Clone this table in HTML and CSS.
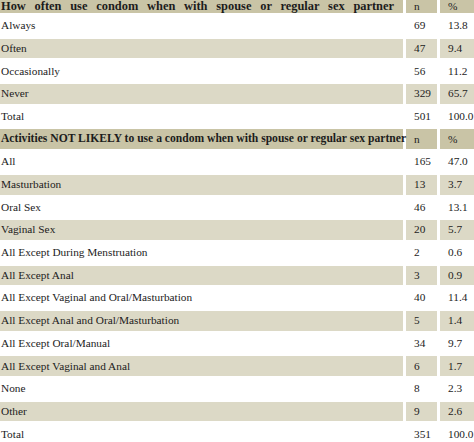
FILE: index.html
```html
<!DOCTYPE html>
<html>
<head>
<meta charset="utf-8">
<link rel="stylesheet" href="styles.css">
</head>
<body>
<table class="data">
  <colgroup><col class="c-label"><col class="c-n"><col class="c-pct"></colgroup>
  <tr class="head first"><td class="lbl">How often use condom when with spouse or regular sex partner</td><td class="n">n</td><td class="p">%</td></tr>
  <tr><td>Always</td><td class="n">69</td><td class="p">13.8</td></tr>
  <tr class="alt"><td>Often</td><td class="n">47</td><td class="p">9.4</td></tr>
  <tr><td>Occasionally</td><td class="n">56</td><td class="p">11.2</td></tr>
  <tr class="alt"><td>Never</td><td class="n">329</td><td class="p">65.7</td></tr>
  <tr><td>Total</td><td class="n">501</td><td class="p">100.0</td></tr>
  <tr class="head"><td class="lbl">Activities NOT LIKELY to use a condom when with spouse or regular sex partner</td><td class="n">n</td><td class="p">%</td></tr>
  <tr><td>All</td><td class="n">165</td><td class="p">47.0</td></tr>
  <tr class="alt"><td>Masturbation</td><td class="n">13</td><td class="p">3.7</td></tr>
  <tr><td>Oral Sex</td><td class="n">46</td><td class="p">13.1</td></tr>
  <tr class="alt"><td>Vaginal Sex</td><td class="n">20</td><td class="p">5.7</td></tr>
  <tr><td>All Except During Menstruation</td><td class="n">2</td><td class="p">0.6</td></tr>
  <tr class="alt"><td>All Except Anal</td><td class="n">3</td><td class="p">0.9</td></tr>
  <tr><td>All Except Vaginal and Oral/Masturbation</td><td class="n">40</td><td class="p">11.4</td></tr>
  <tr class="alt"><td>All Except Anal and Oral/Masturbation</td><td class="n">5</td><td class="p">1.4</td></tr>
  <tr><td>All Except Oral/Manual</td><td class="n">34</td><td class="p">9.7</td></tr>
  <tr class="alt"><td>All Except Vaginal and Anal</td><td class="n">6</td><td class="p">1.7</td></tr>
  <tr><td>None</td><td class="n">8</td><td class="p">2.3</td></tr>
  <tr class="alt"><td>Other</td><td class="n">9</td><td class="p">2.6</td></tr>
  <tr><td>Total</td><td class="n">351</td><td class="p">100.0</td></tr>
</table>
</body>
</html>
```
FILE: styles.css
```css
html, body {
  margin: 0;
  padding: 0;
  background: #ffffff;
  overflow: hidden;
}
.data {
  border-collapse: separate;
  border-spacing: 3px;
  margin: -3px 0 0 -3px;
  table-layout: fixed;
  width: 487px;
  font-family: "Liberation Serif", "Times New Roman", serif;
  font-size: 11.3px;
  color: #1c1c1c;
}
.c-label { width: 403px; }
.c-n { width: 31px; }
.c-pct { width: 44px; }
.data td {
  height: 19.7px;
  padding: 0 0 0 1px;
  vertical-align: middle;
  white-space: nowrap;
  line-height: 1;
  box-sizing: border-box;
}
.data td.n { padding-left: 8px; }
.data td.p { padding-left: 8px; }
.data tr.first td {
  height: 13px;
}
.data tr.head td {
  background: #c9c4a6;
  font-weight: bold;
}
.data tr.head td.lbl {
  font-size: 11.6px;
  text-align: justify;
  text-align-last: justify;
  padding-right: 9px;
}
.data tr.first td.lbl {
  font-size: 12.4px;
}
.data tr.head td.n,
.data tr.head td.p { font-weight: normal; }
.data tr.alt td { background: #dcd9c6; }
```
